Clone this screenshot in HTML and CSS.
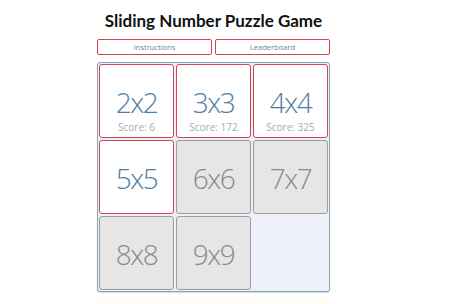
FILE: index.html
```html
<!DOCTYPE html>
<html>
<head>
<meta charset="utf-8">
<link rel="stylesheet" href="styles.css">
</head>
<body>
<div class="app">
  <h1 class="title">Sliding Number Puzzle Game</h1>
  <div class="actions">
    <button class="btn">Instructions</button>
    <button class="btn">Leaderboard</button>
  </div>
  <div class="board">
    <div class="tile open"><span class="size">2x2</span><span class="score">Score: 6</span></div>
    <div class="tile open"><span class="size">3x3</span><span class="score">Score: 172</span></div>
    <div class="tile open"><span class="size">4x4</span><span class="score">Score: 325</span></div>
    <div class="tile open"><span class="size">5x5</span></div>
    <div class="tile locked"><span class="size">6x6</span></div>
    <div class="tile locked"><span class="size">7x7</span></div>
    <div class="tile locked"><span class="size">8x8</span></div>
    <div class="tile locked"><span class="size">9x9</span></div>
  </div>
  <div class="footer"></div>
</div>
</body>
</html>
```
FILE: styles.css
```css
html, body {
  margin: 0;
  padding: 0;
  background: #ffffff;
}
body {
  font-family: "Open Sans", "Noto Sans", sans-serif;
  overflow: hidden;
}
.app {
  width: 233px;
  margin-left: 97px;
  padding-top: 9px;
}
.title {
  margin: 0;
  font-family: Lato, "Open Sans", sans-serif;
  font-size: 17px;
  font-weight: 700;
  line-height: 23px;
  text-align: center;
  color: #111111;
  white-space: nowrap;
}
.actions {
  display: flex;
  gap: 3px;
  margin-top: 7px;
}
.btn {
  flex: 1;
  height: 16px;
  padding: 0;
  background: #ffffff;
  border: 1.5px solid #d2434e;
  border-radius: 2px;
  font-family: "Open Sans", "Noto Sans", sans-serif;
  font-size: 7.5px;
  color: #6f8296;
  line-height: 12px;
}
.board {
  margin-top: 7px;
  display: grid;
  grid-template-columns: repeat(3, 1fr);
  grid-auto-rows: 74px;
  gap: 2px;
  padding: 1px;
  border: 1px solid #8ba5b5;
  border-radius: 3px;
  background: #edf0f8;
  box-shadow: 0 1px 1px rgba(120, 150, 170, 0.35);
}
.tile {
  display: flex;
  flex-direction: column;
  align-items: center;
  padding-top: 20px;
  border-radius: 3px;
  box-sizing: border-box;
}
.tile.open {
  background: #ffffff;
  border: 1.5px solid #d4434f;
}
.tile.locked {
  background: #e6e6e6;
  border: 1.5px solid #9c9c9c;
}
.size {
  font-size: 28px;
  font-weight: 300;
  line-height: 34px;
  letter-spacing: -1.5px;
}
.open .size {
  color: #4f7ea4;
}
.locked .size {
  color: #8a8a8a;
}
.score {
  margin-top: 1px;
  font-size: 10px;
  line-height: 14px;
  color: #a3abb3;
}
.footer {
  margin-top: 8px;
  height: 10px;
  background: #fffef5;
}
```
